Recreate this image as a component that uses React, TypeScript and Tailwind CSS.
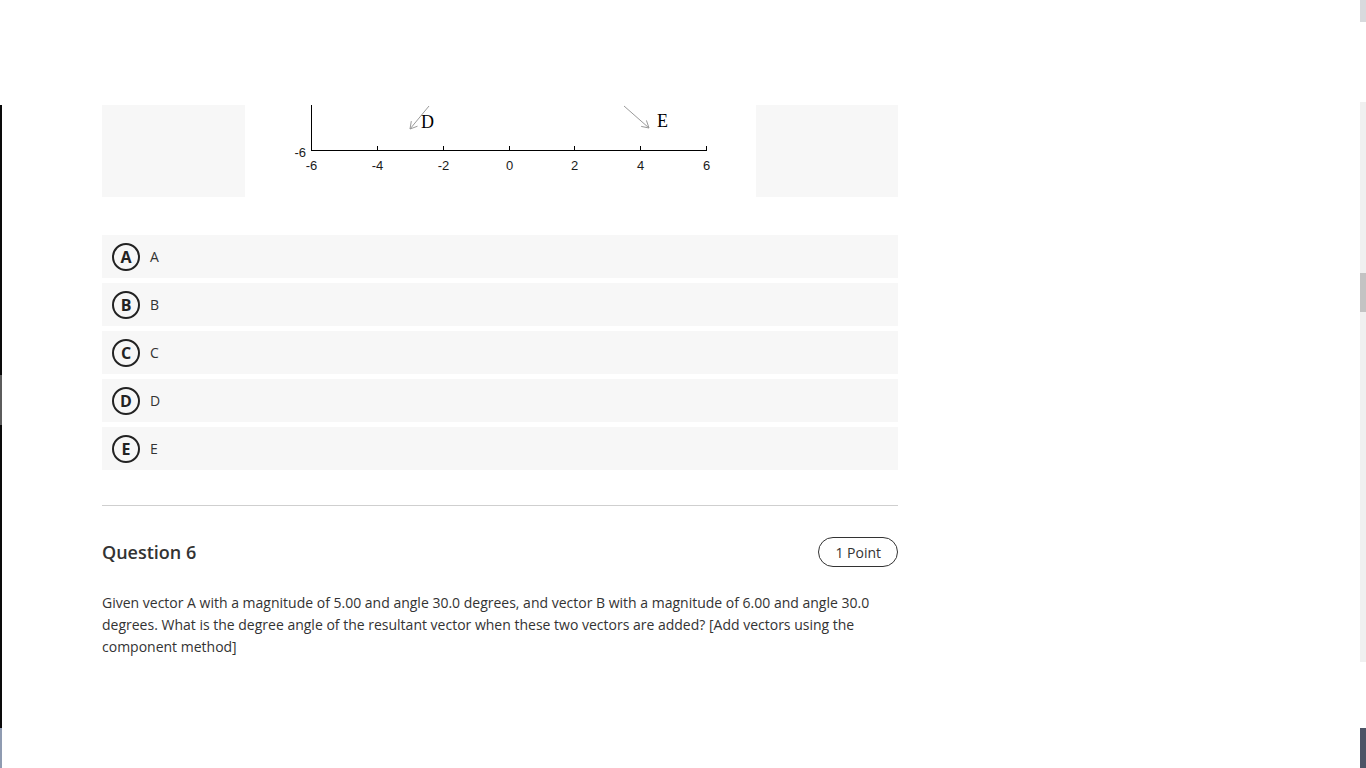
import React from "react";

const options = ["A", "B", "C", "D", "E"];
const ticks = [
  { x: 66, l: "-6" },
  { x: 132, l: "-4" },
  { x: 198, l: "-2" },
  { x: 264, l: "0" },
  { x: 329, l: "2" },
  { x: 395, l: "4" },
  { x: 461, l: "6" },
];

function Chart() {
  return (
    <svg width="511" height="92" viewBox="0 0 511 92" className="block bg-white">
      <line x1="66.5" y1="0" x2="66.5" y2="45.5" stroke="#000" strokeWidth="1" />
      <line x1="66" y1="45.5" x2="462" y2="45.5" stroke="#000" strokeWidth="1" />
      {ticks.map((t) => (
        <g key={t.l}>
          <line x1={t.x + 0.5} y1="41" x2={t.x + 0.5} y2="45" stroke="#000" strokeWidth="1" />
          <text x={t.x + 0.5} y="65" textAnchor="middle" fontFamily="Liberation Sans, Arial, sans-serif" fontSize="13" fill="#1a1a1a">
            {t.l}
          </text>
        </g>
      ))}
      <text x="61" y="52" textAnchor="end" fontFamily="Liberation Sans, Arial, sans-serif" fontSize="13" fill="#1a1a1a">
        -6
      </text>
      <g stroke="#9a9a9a" strokeWidth="1" fill="none">
        <line x1="184" y1="1" x2="165" y2="24" />
        <polyline points="172.5,21.2 165,24 166.3,16.1" />
        <line x1="379" y1="1" x2="404" y2="23" />
        <polyline points="401.4,15.4 404,23 396.2,21.4" />
      </g>
      <text x="176" y="23" fontFamily="Liberation Serif, 'Times New Roman', serif" fontSize="18" fill="#000">
        D
      </text>
      <text x="412" y="22" fontFamily="Liberation Serif, 'Times New Roman', serif" fontSize="18" fill="#000">
        E
      </text>
    </svg>
  );
}

export default function App() {
  return (
    <div className="w-[1366px] h-[768px] flex overflow-hidden bg-white font-['Open_Sans',sans-serif] text-[#333]">
      <div className="w-[2px] flex flex-col shrink-0">
        <div className="h-[105px] bg-white" />
        <div className="h-[270px] bg-[#0a0a0a]" />
        <div className="h-[50px] bg-[#5c5c5c]" />
        <div className="flex-1 bg-[#0a0a0a]" />
        <div className="h-[40px] bg-[#8f9bb1]" />
      </div>

      <div className="flex-1 pl-[100px] pt-[105px]">
        <div className="w-[796px] flex flex-col">
          <div className="h-[92px] bg-[#f7f7f7] flex justify-center">
            <Chart />
          </div>

          <div className="mt-[38px] flex flex-col gap-[5px]">
            {options.map((o) => (
              <div key={o} className="h-[43px] bg-[#f7f7f7] flex items-center pl-[10px]">
                <div className="w-[28px] h-[28px] rounded-full border-2 border-[#222] flex items-center justify-center text-[16px] font-bold text-[#222] leading-none">
                  {o}
                </div>
                <span className="ml-[10px] text-[14px] text-[#333]">{o}</span>
              </div>
            ))}
          </div>

          <div className="mt-[35px] h-px bg-[#cfcfcf]" />

          <div className="mt-[31px] flex items-center justify-between">
            <h2 className="text-[18px] font-semibold text-[#333]">Question 6</h2>
            <div className="h-[30px] px-[16px] rounded-full border border-[#333] flex items-center text-[14px] text-[#333]">
              1 Point
            </div>
          </div>

          <p className="mt-[25px] text-[14px] leading-[22px] text-[#333]">
            Given vector A with a magnitude of 5.00 and angle 30.0 degrees, and vector B with a magnitude of 6.00 and angle 30.0 degrees. What is the degree angle of the resultant vector when these two vectors are added? [Add vectors using the component method]
          </p>
        </div>
      </div>

      <div className="w-[6px] flex flex-col shrink-0">
        <div className="h-[22px] bg-[#d8dadd]" />
        <div className="h-[80px] bg-white" />
        <div className="h-[171px] bg-[#f0f0f0]" />
        <div className="h-[39px] bg-[#c3c3c3]" />
        <div className="h-[350px] bg-[#f0f0f0]" />
        <div className="flex-1 bg-white" />
        <div className="h-[40px] bg-[#4d5466]" />
      </div>
    </div>
  );
}
